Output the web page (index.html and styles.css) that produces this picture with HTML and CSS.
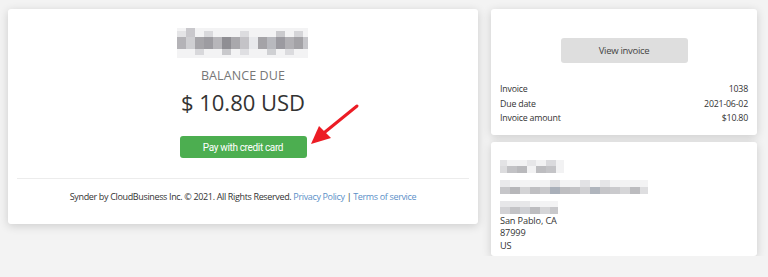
FILE: index.html
```html
<!DOCTYPE html>
<html>
<head>
<meta charset="utf-8">
<link rel="stylesheet" href="styles.css">
</head>
<body>
<div class="page">
  <div class="card main">
    <svg class="mosaic name" width="131" height="30" viewBox="0 0 131 30">
      <rect x="0" y="0" width="131" height="30" fill="#f3f3f4"/>
      <rect x="0" y="3" width="9" height="6" fill="#e4e4e6"/>
      <rect x="0" y="9" width="9" height="12" fill="#b4b3b7"/>
      <rect x="9" y="9" width="9" height="12" fill="#cfcfd2"/>
      <rect x="18" y="9" width="9" height="12" fill="#a6a5a9"/>
      <rect x="27" y="9" width="9" height="12" fill="#9d9ca1"/>
      <rect x="36" y="9" width="9" height="12" fill="#b7b6ba"/>
      <rect x="45" y="9" width="9" height="12" fill="#8f8e93"/>
      <rect x="54" y="9" width="9" height="12" fill="#a9a8ac"/>
      <rect x="63" y="9" width="9" height="12" fill="#c4c3c7"/>
      <rect x="72" y="9" width="9" height="12" fill="#e8e9ec"/>
      <rect x="81" y="9" width="9" height="12" fill="#a4a3a7"/>
      <rect x="90" y="9" width="9" height="12" fill="#b8b9be"/>
      <rect x="99" y="9" width="9" height="12" fill="#9b9aa0"/>
      <rect x="108" y="9" width="9" height="12" fill="#b1b0b4"/>
      <rect x="117" y="9" width="9" height="12" fill="#a3a2a6"/>
      <rect x="126" y="9" width="5" height="12" fill="#c6c6ca"/>
      <rect x="9" y="0" width="9" height="9" fill="#c9c8cc"/>
      <rect x="27" y="3" width="9" height="6" fill="#d9d9dc"/>
      <rect x="63" y="3" width="9" height="6" fill="#dcdcdf"/>
      <rect x="99" y="3" width="9" height="6" fill="#cacacd"/>
      <rect x="117" y="3" width="9" height="6" fill="#d5d5d8"/>
      <rect x="18" y="21" width="9" height="6" fill="#d8d8db"/>
      <rect x="45" y="21" width="9" height="6" fill="#c9c9cc"/>
      <rect x="63" y="21" width="9" height="6" fill="#dfdfe2"/>
      <rect x="90" y="21" width="9" height="6" fill="#cfd0d3"/>
      <rect x="108" y="21" width="9" height="6" fill="#dbdbde"/>
    </svg>
    <div class="label">BALANCE DUE</div>
    <div class="amount">$ 10.80 USD</div>
    <button class="pay">Pay with credit card</button>
    <div class="divider"></div>
    <div class="footer">Synder by CloudBusiness Inc. © 2021. All Rights Reserved. <a href="#">Privacy Policy</a> | <a href="#">Terms of service</a></div>
    <svg class="arrow" width="60" height="50" viewBox="0 0 60 50">
      <line x1="54" y1="4" x2="22" y2="30" stroke="#ec1c24" stroke-width="3" stroke-linecap="round"/>
      <polygon points="8,42 16,24 28,36" fill="#ec1c24"/>
    </svg>
  </div>
  <div class="side">
    <div class="card invoice">
      <button class="view">View invoice</button>
      <div class="rows">
        <div class="row"><span>Invoice</span><span>1038</span></div>
        <div class="row"><span>Due date</span><span>2021-06-02</span></div>
        <div class="row"><span>Invoice amount</span><span>$10.80</span></div>
      </div>
    </div>
    <div class="card address">
      <svg class="mosaic" width="64" height="13" viewBox="0 0 64 13">
        <rect width="64" height="13" fill="#f2f2f3"/>
        <rect x="0" y="0" width="7" height="6" fill="#e3e3e5"/>
        <rect x="7" y="6" width="10" height="7" fill="#c2c2c5"/>
        <rect x="17" y="6" width="10" height="7" fill="#b9b9bc"/>
        <rect x="27" y="0" width="9" height="6" fill="#e6e6e8"/>
        <rect x="36" y="6" width="10" height="7" fill="#bdbdc0"/>
        <rect x="46" y="6" width="10" height="7" fill="#c4c4c7"/>
        <rect x="46" y="0" width="10" height="6" fill="#dadadd"/>
        <rect x="0" y="6" width="7" height="7" fill="#dcdcde"/>
      </svg>
      <svg class="mosaic" width="148" height="14" viewBox="0 0 148 14">
        <rect width="148" height="14" fill="#f3f3f4"/>
        <rect x="0" y="7" width="10" height="7" fill="#c6c6c9"/>
        <rect x="10" y="7" width="10" height="7" fill="#b7b7ba"/>
        <rect x="20" y="7" width="10" height="7" fill="#d4d4d6"/>
        <rect x="30" y="7" width="10" height="7" fill="#bfbfc2"/>
        <rect x="40" y="7" width="10" height="7" fill="#c9c9cc"/>
        <rect x="50" y="7" width="10" height="7" fill="#a9afb9"/>
        <rect x="60" y="7" width="10" height="7" fill="#bebec1"/>
        <rect x="70" y="7" width="10" height="7" fill="#c3c3c6"/>
        <rect x="80" y="7" width="10" height="7" fill="#d0d0d3"/>
        <rect x="90" y="7" width="10" height="7" fill="#b0b5bd"/>
        <rect x="100" y="7" width="10" height="7" fill="#c6c6c9"/>
        <rect x="110" y="7" width="10" height="7" fill="#cacacd"/>
        <rect x="120" y="7" width="10" height="7" fill="#d6d6d8"/>
        <rect x="130" y="7" width="10" height="7" fill="#bcbcbf"/>
        <rect x="140" y="7" width="8" height="7" fill="#dedee0"/>
        <rect x="50" y="0" width="10" height="7" fill="#e1e1e4"/>
        <rect x="80" y="0" width="10" height="7" fill="#e2e2e5"/>
        <rect x="100" y="0" width="10" height="7" fill="#e6e6e8"/>
        <rect x="0" y="0" width="10" height="7" fill="#e9e9eb"/>
      </svg>
      <svg class="mosaic" width="58" height="13" viewBox="0 0 58 13">
        <rect width="58" height="13" fill="#f3f3f4"/>
        <rect x="0" y="0" width="30" height="6" fill="#e7e7e9"/>
        <rect x="0" y="6" width="10" height="7" fill="#d3d3d6"/>
        <rect x="10" y="6" width="10" height="7" fill="#c3c3c6"/>
        <rect x="20" y="6" width="10" height="7" fill="#cfd0d4"/>
        <rect x="30" y="6" width="10" height="7" fill="#bdbdc0"/>
        <rect x="40" y="6" width="10" height="7" fill="#d6d6d8"/>
        <rect x="50" y="6" width="8" height="7" fill="#c8c8cb"/>
      </svg>
      <div class="addr">San Pablo, CA<br>87999<br>US</div>
    </div>
  </div>
</div>
</body>
</html>
```

FILE: styles.css
```css
html, body {
  margin: 0;
  padding: 0;
  background: #f3f3f3;
}
body {
  font-family: "Open Sans", "Noto Sans", sans-serif;
  color: #333;
}
.page {
  display: flex;
  align-items: flex-start;
  gap: 13px;
  padding: 9px 0 0 8px;
}
.card {
  background: #fff;
  border-radius: 3px;
  box-shadow: 0 2px 10px rgba(0, 0, 0, 0.16);
}
.main {
  position: relative;
  width: 470px;
  height: 215px;
  box-sizing: border-box;
  padding: 19px 9px 0;
  display: flex;
  flex-direction: column;
  align-items: center;
}
.mosaic {
  display: block;
}
.name {
  margin-left: -1px;
}
.label {
  margin-top: 10px;
  font-size: 12.5px;
  line-height: 16px;
  color: #777;
  letter-spacing: 0.1px;
}
.amount {
  margin-top: 3px;
  font-size: 22px;
  line-height: 30px;
  color: #333;
}
.pay {
  margin-top: 19px;
  width: 127px;
  height: 22px;
  border: none;
  border-radius: 3px;
  background: #4cae50;
  color: #fff;
  font-family: Roboto, "Liberation Sans", sans-serif;
  font-size: 10px;
  letter-spacing: -0.35px;
  padding: 0;
}
.divider {
  align-self: stretch;
  margin-top: 20px;
  height: 1px;
  background: #ececec;
}
.footer {
  margin-top: 11px;
  font-size: 9px;
  letter-spacing: -0.35px;
  line-height: 14px;
  color: #333;
}
.footer a {
  color: #5b90c8;
  text-decoration: none;
}
.arrow {
  position: absolute;
  left: 295px;
  top: 93px;
}
.side {
  width: 266px;
  display: flex;
  flex-direction: column;
  gap: 7px;
}
.invoice {
  height: 126px;
  box-sizing: border-box;
  padding: 29px 9px 0;
  display: flex;
  flex-direction: column;
}
.view {
  align-self: center;
  width: 127px;
  height: 25px;
  border: none;
  border-radius: 3px;
  background: #dedede;
  color: #444;
  font-family: "Open Sans", sans-serif;
  font-size: 9.5px;
  letter-spacing: -0.3px;
  padding: 0;
}
.rows {
  margin-top: 19px;
  display: flex;
  flex-direction: column;
}
.row {
  display: flex;
  justify-content: space-between;
  font-size: 8.8px;
  letter-spacing: -0.2px;
  line-height: 14.5px;
  color: #333;
}
.address {
  height: 114px;
  box-sizing: border-box;
  padding: 18px 9px 0;
  display: flex;
  flex-direction: column;
  gap: 7px;
}
.addr {
  margin-top: -6px;
  font-size: 9.2px;
  letter-spacing: -0.15px;
  line-height: 12.4px;
  color: #333;
}
```
